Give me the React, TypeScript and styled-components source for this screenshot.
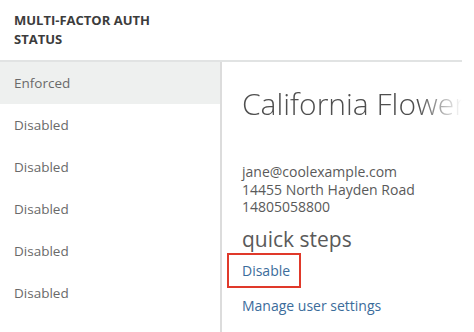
import React from 'react';
import styled, { createGlobalStyle } from 'styled-components';

const GlobalStyle = createGlobalStyle`
  html, body {
    margin: 0;
    padding: 0;
    background: #ffffff;
  }
  body {
    font-family: 'Open Sans', 'Noto Sans', sans-serif;
  }
`;

const statuses = ['Enforced', 'Disabled', 'Disabled', 'Disabled', 'Disabled', 'Disabled'];

export default function App() {
  return (
    <>
      <GlobalStyle />
      <S.Page>
        <S.Header>
          <S.HeaderTitle>MULTI-FACTOR AUTH STATUS</S.HeaderTitle>
        </S.Header>
        <S.Body>
          <S.StatusList>
            {statuses.map((status, i) => (
              <S.StatusRow key={i} selected={i === 0}>
                {status}
              </S.StatusRow>
            ))}
          </S.StatusList>
          <S.DetailPanel>
            <S.UserName>California Flower Shop</S.UserName>
            <S.ContactInfo>
              <div>jane@coolexample.com</div>
              <div>14455 North Hayden Road</div>
              <div>14805058800</div>
            </S.ContactInfo>
            <S.SectionTitle>quick steps</S.SectionTitle>
            <S.ActionLink highlighted>Disable</S.ActionLink>
            <S.ActionLink>Manage user settings</S.ActionLink>
          </S.DetailPanel>
        </S.Body>
      </S.Page>
    </>
  );
}

const S = {
  Page: styled.div`
    width: 462px;
    height: 332px;
    overflow: hidden;
    display: flex;
    flex-direction: column;
  `,
  Header: styled.div`
    height: 62px;
    box-sizing: border-box;
    padding: 11px 14px 0;
    border-bottom: 2px solid #e1e3e3;
  `,
  HeaderTitle: styled.div`
    width: 160px;
    font-size: 13px;
    font-weight: 700;
    line-height: 19px;
    color: #3c3c3c;
  `,
  Body: styled.div`
    flex: 1;
    display: grid;
    grid-template-columns: 222px 1fr;
    min-height: 0;
  `,
  StatusList: styled.div`
    display: flex;
    flex-direction: column;
    border-right: 2px solid #dcdcdc;
  `,
  StatusRow: styled.div<{ selected?: boolean }>`
    height: 42px;
    display: flex;
    align-items: center;
    padding-left: 14px;
    font-size: 13.5px;
    color: #6a6a6a;
    background: ${(p) => (p.selected ? '#eef0ef' : 'transparent')};
  `,
  DetailPanel: styled.div`
    padding: 22px 0 0 20px;
    display: flex;
    flex-direction: column;
    align-items: flex-start;
    min-width: 0;
  `,
  UserName: styled.div`
    width: 100%;
    font-size: 30px;
    font-weight: 300;
    line-height: 40px;
    color: #4f4f4f;
    white-space: nowrap;
    overflow: hidden;
    -webkit-mask-image: linear-gradient(to right, #000 80%, transparent 100%);
    mask-image: linear-gradient(to right, #000 80%, transparent 100%);
  `,
  ContactInfo: styled.div`
    margin-top: 39px;
    font-size: 14px;
    line-height: 17.5px;
    color: #5a5a5a;
  `,
  SectionTitle: styled.div`
    margin-top: 9px;
    font-size: 21px;
    font-weight: 400;
    line-height: 28px;
    color: #5a5a5a;
  `,
  ActionLink: styled.a<{ highlighted?: boolean }>`
    display: block;
    font-size: 14px;
    line-height: 18px;
    color: #3b6c9b;
    cursor: pointer;
    margin-left: -15px;
    padding: 7px 9px 6px 13px;
    border: 2px solid ${(p) => (p.highlighted ? '#e0392a' : 'transparent')};
  `,
};
